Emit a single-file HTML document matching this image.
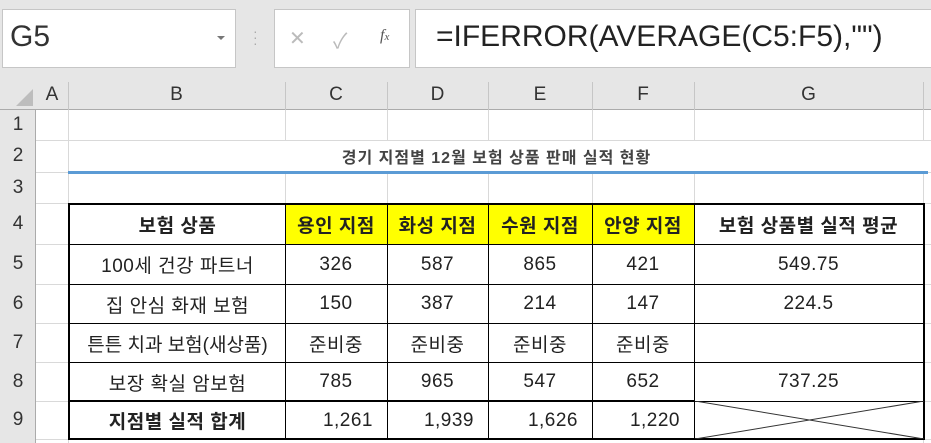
<!DOCTYPE html><html><head><meta charset="utf-8"><style>
*{margin:0;padding:0;box-sizing:border-box}
body{width:931px;height:443px;overflow:hidden;background:#fff;position:relative;font-family:"Liberation Sans","Noto Sans CJK KR",sans-serif;color:#222}
.a{position:absolute}
.vl{position:absolute;width:1px;background:#d9d9d9}
.hl{position:absolute;height:1px;background:#d9d9d9}
.c{position:absolute;display:flex;align-items:center;justify-content:center;font-size:19px;letter-spacing:0.5px;white-space:nowrap}
.rh{position:absolute;left:0;width:36px;display:flex;align-items:center;justify-content:center;font-size:19px;color:#333}
.ch{position:absolute;top:80px;height:30px;display:flex;align-items:center;justify-content:center;font-size:19px;color:#333}
.b{font-weight:bold}
.y{background:#ffff00}
</style></head><body>
<div class="a" style="left:0;top:0;width:931px;height:80px;background:#e6e6e6"></div>
<div class="a" style="left:2px;top:9px;width:234px;height:59px;background:#fff;border:1px solid #c6c6c6"></div>
<div class="a" style="left:10px;top:20px;font-size:30px;color:#333">G5</div>
<div class="a" style="left:217px;top:36px;width:0;height:0;border-left:4px solid transparent;border-right:4px solid transparent;border-top:4px solid #777"></div>
<div class="a" style="left:253px;top:28px;color:#aaa;font-size:14px;line-height:6px">·<br>·<br>·</div>
<div class="a" style="left:274px;top:9px;width:136px;height:59px;background:#fff;border:1px solid #c6c6c6"></div>
<div class="a" style="left:289px;top:26px;color:#bbb;font-size:20px">✕</div>
<div class="a" style="left:333px;top:25px;color:#bbb;font-size:21px">✓</div>
<div class="a" style="left:380px;top:27px;color:#555;font-size:16px;font-style:italic;font-family:'Liberation Serif',serif">f<span style="font-size:11px">x</span></div>
<div class="a" style="left:415px;top:9px;width:520px;height:59px;background:#fff;border:1px solid #c6c6c6"></div>
<div class="a" style="left:436px;top:20px;font-size:30px;color:#222">=IFERROR(AVERAGE(C5:F5),"")</div>

<div class="a" style="left:0;top:80px;width:931px;height:30px;background:#e6e6e6;border-bottom:1px solid #ababab"></div>
<div class="a" style="left:0;top:110px;width:36px;height:333px;background:#e6e6e6;border-right:1px solid #ababab"></div>
<div class="a" style="left:16px;top:89px;width:0;height:0;border-left:17px solid transparent;border-bottom:17px solid #bdbdbd"></div>
<div class="ch" style="left:36px;width:32px">A</div>
<div class="ch" style="left:68px;width:217px">B</div>
<div class="ch" style="left:285px;width:102px">C</div>
<div class="ch" style="left:387px;width:101px">D</div>
<div class="ch" style="left:488px;width:104px">E</div>
<div class="ch" style="left:592px;width:102px">F</div>
<div class="ch" style="left:694px;width:229px">G</div>
<div class="a" style="left:68px;top:82px;width:1px;height:28px;background:#c6c6c6"></div>
<div class="a" style="left:285px;top:82px;width:1px;height:28px;background:#c6c6c6"></div>
<div class="a" style="left:387px;top:82px;width:1px;height:28px;background:#c6c6c6"></div>
<div class="a" style="left:488px;top:82px;width:1px;height:28px;background:#c6c6c6"></div>
<div class="a" style="left:592px;top:82px;width:1px;height:28px;background:#c6c6c6"></div>
<div class="a" style="left:694px;top:82px;width:1px;height:28px;background:#c6c6c6"></div>
<div class="a" style="left:923px;top:82px;width:1px;height:28px;background:#c6c6c6"></div>

<div class="rh" style="top:110px;height:30px">1</div>
<div class="rh" style="top:140px;height:32px">2</div>
<div class="rh" style="top:172px;height:31px">3</div>
<div class="rh" style="top:203px;height:41px">4</div>
<div class="rh" style="top:244px;height:40px">5</div>
<div class="rh" style="top:284px;height:39px">6</div>
<div class="rh" style="top:323px;height:39px">7</div>
<div class="rh" style="top:362px;height:39px">8</div>
<div class="rh" style="top:401px;height:38px">9</div>

<div class="vl" style="left:68px;top:110px;height:333px"></div>
<div class="vl" style="left:285px;top:110px;height:93px"></div>
<div class="vl" style="left:387px;top:110px;height:93px"></div>
<div class="vl" style="left:488px;top:110px;height:93px"></div>
<div class="vl" style="left:592px;top:110px;height:93px"></div>
<div class="vl" style="left:694px;top:110px;height:93px"></div>
<div class="vl" style="left:923px;top:110px;height:333px"></div>
<div class="hl" style="left:36px;top:140px;width:895px"></div>
<div class="hl" style="left:36px;top:172px;width:895px"></div>
<div class="hl" style="left:36px;top:203px;width:895px"></div>
<div class="hl" style="left:36px;top:244px;width:32px"></div><div class="hl" style="left:924px;top:244px;width:7px"></div>
<div class="hl" style="left:36px;top:284px;width:32px"></div><div class="hl" style="left:924px;top:284px;width:7px"></div>
<div class="hl" style="left:36px;top:323px;width:32px"></div><div class="hl" style="left:924px;top:323px;width:7px"></div>
<div class="hl" style="left:36px;top:362px;width:32px"></div><div class="hl" style="left:924px;top:362px;width:7px"></div>
<div class="hl" style="left:36px;top:401px;width:32px"></div><div class="hl" style="left:924px;top:401px;width:7px"></div>
<div class="hl" style="left:36px;top:439px;width:895px"></div>

<div class="a" style="left:69px;top:141px;width:855px;height:31px;background:#fff"></div>
<div class="c b" style="left:69px;top:141px;width:855px;height:29px;font-size:16px;letter-spacing:1px;color:#444">경기 지점별 12월 보험 상품 판매 실적 현황</div>
<div class="a" style="left:68px;top:171px;width:860px;height:3px;background:#5b9bd5"></div>

<div class="a y" style="left:285px;top:204px;width:409px;height:40px"></div>
<div class="a" style="left:68px;top:203px;width:857px;height:237px;border:2px solid #000"></div>
<div class="a" style="left:285px;top:203px;width:1px;height:237px;background:#000"></div>
<div class="a" style="left:387px;top:203px;width:1px;height:237px;background:#000"></div>
<div class="a" style="left:488px;top:203px;width:1px;height:237px;background:#000"></div>
<div class="a" style="left:592px;top:203px;width:1px;height:237px;background:#000"></div>
<div class="a" style="left:694px;top:203px;width:1px;height:237px;background:#000"></div>
<div class="a" style="left:68px;top:244px;width:857px;height:1px;background:#000"></div>
<div class="a" style="left:68px;top:284px;width:857px;height:1px;background:#000"></div>
<div class="a" style="left:68px;top:323px;width:857px;height:1px;background:#000"></div>
<div class="a" style="left:68px;top:362px;width:857px;height:1px;background:#000"></div>
<div class="a" style="left:68px;top:400px;width:627px;height:2px;background:#000"></div>
<div class="a" style="left:694px;top:401px;width:231px;height:1px;background:#000"></div>
<svg class="a" style="left:695px;top:401px" width="229" height="38"><line x1="0" y1="38" x2="229" y2="0" stroke="#333" stroke-width="1"/><line x1="0" y1="0" x2="229" y2="38" stroke="#333" stroke-width="1"/></svg>

<div class="c b" style="left:70px;top:204px;width:215px;height:40px">보험 상품</div>
<div class="c b" style="left:285px;top:204px;width:102px;height:40px">용인 지점</div>
<div class="c b" style="left:387px;top:204px;width:101px;height:40px">화성 지점</div>
<div class="c b" style="left:488px;top:204px;width:104px;height:40px">수원 지점</div>
<div class="c b" style="left:592px;top:204px;width:102px;height:40px">안양 지점</div>
<div class="c b" style="left:694px;top:204px;width:229px;height:40px">보험 상품별 실적 평균</div>

<div class="c" style="left:70px;top:245px;width:215px;height:39px">100세 건강 파트너</div>
<div class="c" style="left:285px;top:245px;width:102px;height:39px">326</div>
<div class="c" style="left:387px;top:245px;width:101px;height:39px">587</div>
<div class="c" style="left:488px;top:245px;width:104px;height:39px">865</div>
<div class="c" style="left:592px;top:245px;width:102px;height:39px">421</div>
<div class="c" style="left:694px;top:245px;width:229px;height:39px">549.75</div>

<div class="c" style="left:70px;top:285px;width:215px;height:38px">집 안심 화재 보험</div>
<div class="c" style="left:285px;top:285px;width:102px;height:38px">150</div>
<div class="c" style="left:387px;top:285px;width:101px;height:38px">387</div>
<div class="c" style="left:488px;top:285px;width:104px;height:38px">214</div>
<div class="c" style="left:592px;top:285px;width:102px;height:38px">147</div>
<div class="c" style="left:694px;top:285px;width:229px;height:38px">224.5</div>

<div class="c" style="left:70px;top:324px;width:215px;height:38px;letter-spacing:0">튼튼 치과 보험(새상품)</div>
<div class="c" style="left:285px;top:324px;width:102px;height:38px">준비중</div>
<div class="c" style="left:387px;top:324px;width:101px;height:38px">준비중</div>
<div class="c" style="left:488px;top:324px;width:104px;height:38px">준비중</div>
<div class="c" style="left:592px;top:324px;width:102px;height:38px">준비중</div>

<div class="c" style="left:70px;top:363px;width:215px;height:38px">보장 확실 암보험</div>
<div class="c" style="left:285px;top:363px;width:102px;height:38px">785</div>
<div class="c" style="left:387px;top:363px;width:101px;height:38px">965</div>
<div class="c" style="left:488px;top:363px;width:104px;height:38px">547</div>
<div class="c" style="left:592px;top:363px;width:102px;height:38px">652</div>
<div class="c" style="left:694px;top:363px;width:229px;height:38px">737.25</div>

<div class="c b" style="left:70px;top:402px;width:215px;height:37px">지점별 실적 합계</div>
<div class="c" style="left:285px;top:402px;width:102px;height:37px;justify-content:flex-end;padding-right:14px">1,261</div>
<div class="c" style="left:387px;top:402px;width:101px;height:37px;justify-content:flex-end;padding-right:14px">1,939</div>
<div class="c" style="left:488px;top:402px;width:104px;height:37px;justify-content:flex-end;padding-right:14px">1,626</div>
<div class="c" style="left:592px;top:402px;width:102px;height:37px;justify-content:flex-end;padding-right:14px">1,220</div>
</body></html>
